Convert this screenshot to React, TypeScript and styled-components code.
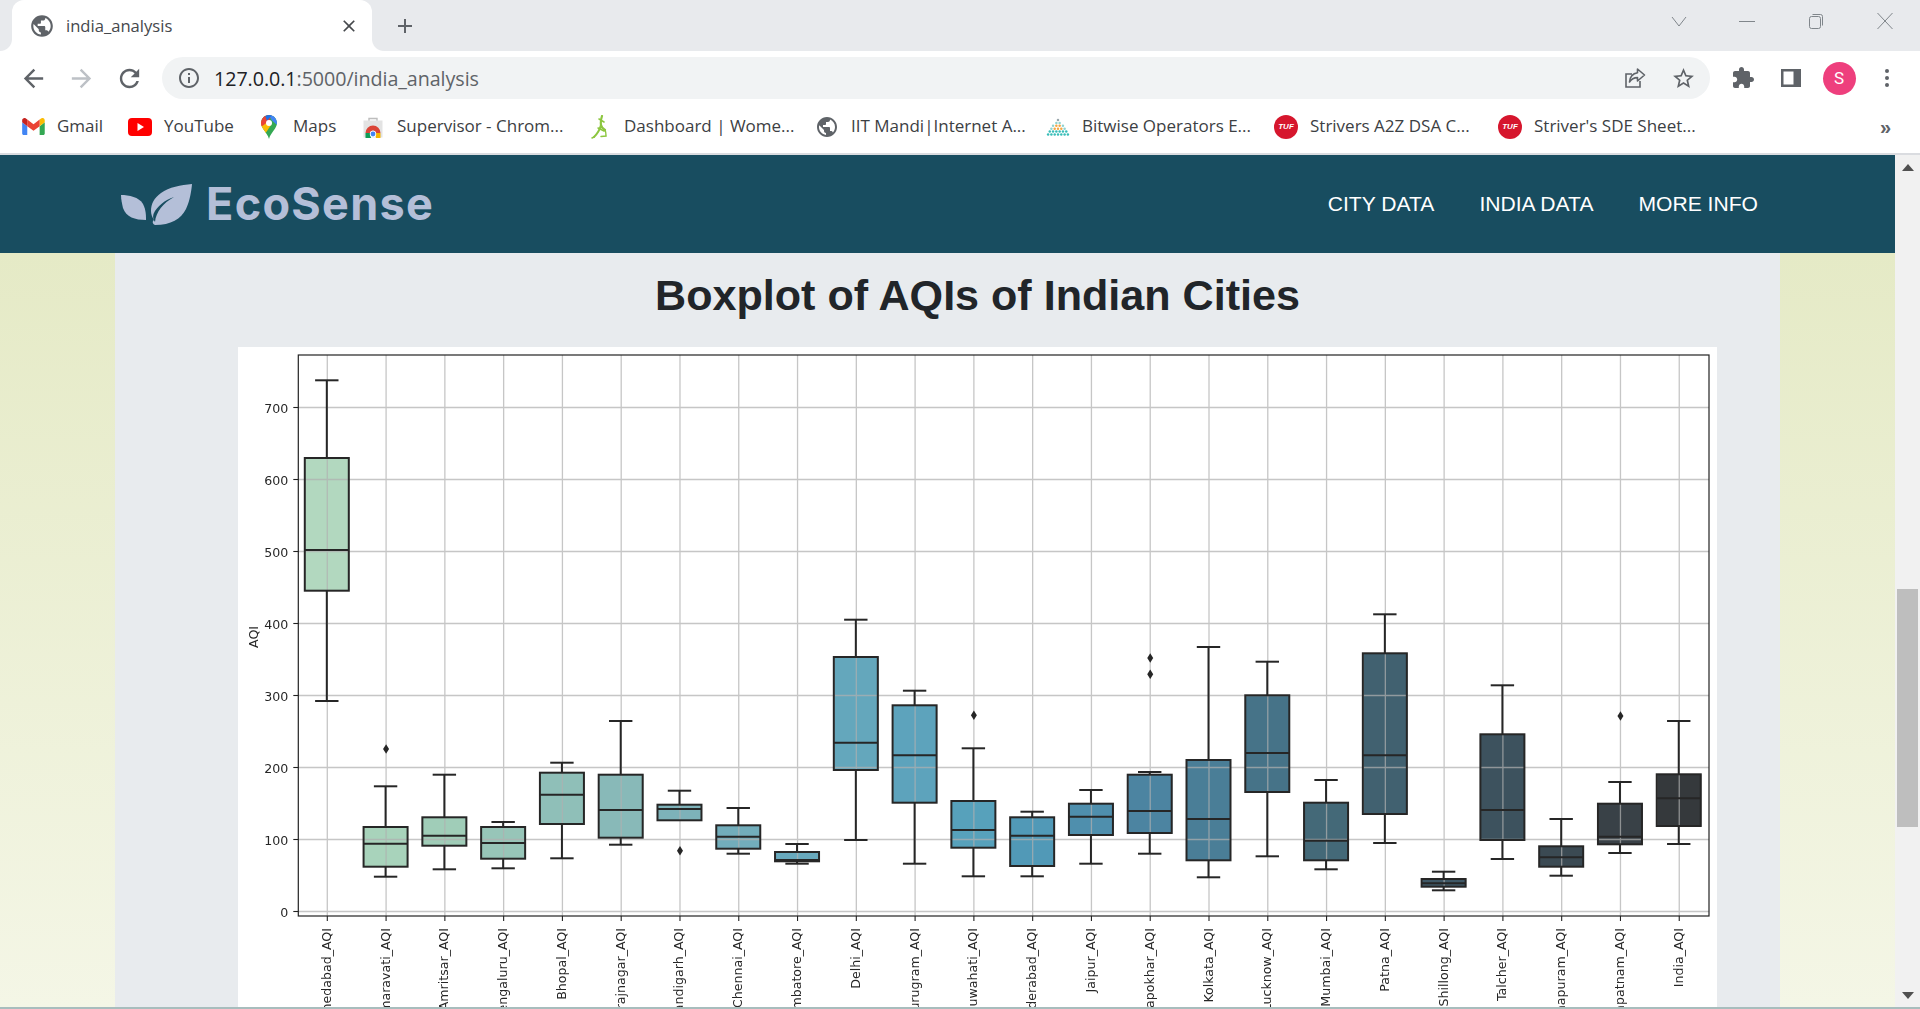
import React from "react";
import styled, { createGlobalStyle } from "styled-components";

const Global = createGlobalStyle`
  html, body { margin: 0; padding: 0; height: 100%; overflow: hidden; background: #fff; }
  #root { height: 1009px; }
  * { box-sizing: border-box; }
`;

const Shell = styled.div`
  height: 1009px; display: flex; flex-direction: column; overflow: hidden;
  font-family: "Open Sans", "Noto Sans", sans-serif;
`;
const TabStrip = styled.div`
  height: 51px; flex: none; background: #e8eaed; display: flex; align-items: flex-end; padding: 0 1px 0 12px;
`;
const Tab = styled.div`
  position: relative; width: 360px; height: 51px; background: #fff; border-radius: 12px 12px 0 0;
  display: flex; align-items: center; padding: 0 13px 0 17px;
  &::before, &::after { content: ""; position: absolute; bottom: 0; width: 12px; height: 12px; }
  &::before { left: -12px; background: radial-gradient(circle at 0 0, #e8eaed 11.5px, #fff 12.5px); }
  &::after { right: -12px; background: radial-gradient(circle at 100% 0, #e8eaed 11.5px, #fff 12.5px); }
`;
const TabTitle = styled.span`
  margin-left: 11px; font-size: 16.6px; color: #45484c; flex: 1; white-space: nowrap;
`;
const NewTab = styled.div`
  width: 24px; height: 51px; margin-left: 21px; display: flex; align-items: center; justify-content: center;
`;
const WindowControls = styled.div`
  margin-left: auto; height: 51px; display: flex;
`;
const WindowBtn = styled.div`
  width: 68.7px; height: 42px; display: flex; align-items: center; justify-content: center;
`;
const Toolbar = styled.div`
  height: 51px; flex: none; background: #fff; display: flex; align-items: flex-start; padding: 6px 9px 0;
`;
const IconSlot = styled.div`
  width: 48px; height: 42px; flex: none; display: flex; align-items: center; justify-content: center;
`;
const Address = styled.div`
  flex: 1; height: 42px; margin: 0 9px; background: #f1f3f4; border-radius: 21px; display: flex; align-items: center;
  padding: 0 3px 0 15px;
`;
const Url = styled.div`
  margin-left: 13px; flex: 1; font-size: 19.7px; color: #5f6368; white-space: nowrap; letter-spacing: -0.06px;
  b { font-weight: 400; color: #202124; }
`;
const Avatar = styled.div`
  width: 33px; height: 33px; border-radius: 50%; background: #ee3f7d; color: #fff; font-size: 17px;
  font-family: "Roboto", sans-serif; display: flex; align-items: center; justify-content: center;
`;
const Bookmarks = styled.div`
  height: 53px; flex: none; background: #fff; border-bottom: 2px solid #dadce0; display: flex; align-items: center;
  gap: 25px; padding: 0 0 2px 21px; position: relative;
`;
const Bookmark = styled.div`
  display: flex; align-items: center; gap: 12px; flex: none;
`;
const BookmarkIcon = styled.div`
  width: 24px; height: 24px; flex: none; display: flex; align-items: center; justify-content: center;
`;
const BookmarkLabel = styled.span<{ $w: number }>`
  width: ${(p) => p.$w}px; font-size: 17px; color: #3c4043; white-space: nowrap; margin-top: -2px;
`;
const More = styled.span`
  margin-left: auto; margin-right: 29px; color: #5f6368; font-size: 20px; font-weight: 700;
  font-family: "Liberation Sans", sans-serif; line-height: 1;
`;
const TufBadge = styled.div`
  width: 24px; height: 24px; border-radius: 50%; background: #d6162d; color: #fff; font: italic 700 8px "Liberation Sans", sans-serif;
  display: flex; align-items: center; justify-content: center;
`;
const Main = styled.div`
  flex: 1; min-height: 0; display: flex; overflow: hidden;
`;
const Page = styled.div`
  flex: 1; min-width: 0; overflow: hidden; display: flex; flex-direction: column;
  font-family: "Liberation Sans", Arial, sans-serif;
`;
const Nav = styled.nav`
  height: 98px; flex: none; background: #184d60; display: flex; align-items: center; padding: 0 137px 0 121px;
`;
const Brand = styled.div`
  display: flex; align-items: center; gap: 14px;
`;
const BrandName = styled.span`
  font-family: "Inter", sans-serif; font-weight: 700; font-size: 45px; line-height: 1; letter-spacing: 1.3px; color: #b4bfd8;
  margin-top: -1px;
`;
const NavLinks = styled.div`
  margin-left: auto; display: flex; gap: 45px;
`;
const NavLink = styled.a`
  font-size: 21.1px; color: #fff; text-transform: uppercase; white-space: nowrap;
`;
const Backdrop = styled.div`
  flex: 1; min-height: 0; padding: 0 115px; background: linear-gradient(180deg, #e5eac6 0%, #f4f6e6 100%);
`;
const Content = styled.main`
  height: 100%; background: #e8ebee; padding: 15px 63px 0 123px; overflow: hidden;
`;
const Title = styled.h1`
  margin: 0 0 25px; font-size: 43.1px; line-height: 54px; font-weight: 700; color: #212529; text-align: center;
`;
const ChartCard = styled.div`
  width: 1479px; height: 800px; background: #fff;
`;
const ChartSvg = styled.svg`
  display: block; filter: blur(0.35px);
  text { font-family: "DejaVu Sans", sans-serif; font-size: 12.6px; fill: #262626; }
`;
const ScrollTrack = styled.div`
  width: 25px; flex: none; background: #f1f1f1; display: flex; flex-direction: column; align-items: center; padding: 9px 0 8px;
`;
const ScrollThumb = styled.div`
  width: 21px; height: 238px; margin-top: 418px; background: #bebebe;
`;
const ScrollDown = styled.div`
  margin-top: auto; display: flex;
`;
const BottomStrip = styled.div`
  height: 2px; flex: none; background: #a8bdbd;
`;

const grey = "#5f6368";
const Mat = ({ d, size = 24, fill = grey }: { d: string; size?: number; fill?: string }) => (
  <svg width={size} height={size} viewBox="0 0 24 24"><path fill={fill} d={d} /></svg>
);
const GLOBE = "M12 2C6.48 2 2 6.48 2 12s4.48 10 10 10 10-4.48 10-10S17.52 2 12 2zm-1 17.93c-3.95-.49-7-3.85-7-7.93 0-.62.08-1.21.21-1.79L9 15v1c0 1.1.9 2 2 2v1.93zm6.9-2.54c-.26-.81-1-1.39-1.9-1.39h-1v-3c0-.55-.45-1-1-1H8v-2h2c.55 0 1-.45 1-1V7h2c1.1 0 2-.9 2-2v-.41c2.93 1.19 5 4.06 5 7.41 0 2.08-.8 3.97-2.1 5.39z";
const BACK = "M20 11H7.83l5.59-5.59L12 4l-8 8 8 8 1.41-1.41L7.83 13H20v-2z";
const FORWARD = "M4 11h12.17l-5.59-5.59L12 4l8 8-8 8-1.41-1.41L16.17 13H4v-2z";
const RELOAD = "M17.65 6.35C16.2 4.9 14.21 4 12 4c-4.42 0-7.99 3.58-7.99 8s3.57 8 7.99 8c3.73 0 6.84-2.55 7.73-6h-2.08c-.82 2.33-3.04 4-5.65 4-3.31 0-6-2.69-6-6s2.69-6 6-6c1.66 0 3.14.69 4.22 1.78L13 11h7V4l-2.35 2.35z";
const INFO = "M11 7h2v2h-2zm0 4h2v6h-2zm1-9C6.48 2 2 6.48 2 12s4.48 10 10 10 10-4.48 10-10S17.52 2 12 2zm0 18c-4.41 0-8-3.59-8-8s3.59-8 8-8 8 3.59 8 8-3.59 8-8 8z";
const STAR = "M22 9.24l-7.19-.62L12 2 9.19 8.63 2 9.24l5.46 4.73L5.82 21 12 17.27 18.18 21l-1.63-7.03L22 9.24zM12 15.4l-3.76 2.27 1-4.28-3.32-2.88 4.38-.38L12 6.1l1.71 4.04 4.38.38-3.32 2.88 1 4.28L12 15.4z";
const PUZZLE = "M20.5 11H19V7c0-1.1-.9-2-2-2h-4V3.5C13 2.12 11.88 1 10.5 1S8 2.12 8 3.5V5H4c-1.1 0-1.99.9-1.99 2v3.8H3.5c1.49 0 2.7 1.21 2.7 2.7s-1.21 2.7-2.7 2.7H2V20c0 1.1.9 2 2 2h3.8v-1.5c0-1.49 1.21-2.7 2.7-2.7 1.49 0 2.7 1.21 2.7 2.7V22H17c1.1 0 2-.9 2-2v-4h1.5c1.38 0 2.5-1.12 2.5-2.5S21.88 11 20.5 11z";
const CLOSE = "M19 6.41L17.59 5 12 10.59 6.41 5 5 6.41 10.59 12 5 17.59 6.41 19 12 13.41 17.59 19 19 17.59 13.41 12z";
const PLUS = "M19 13h-6v6h-2v-6H5v-2h6V5h2v6h6v2z";

const ShareIcon = () => (
  <svg width="24" height="24" viewBox="0 0 24 24" fill="none" stroke={grey} strokeWidth="1.6">
    <path d="M17 15v6H3V8h6" />
    <path fill="#f1f3f4" strokeLinejoin="round" d="M14.5 3l7 6-7 6v-3.4c-3.6 0-6 1.2-8 4.4.4-4.6 3-8.4 8-9.2z" />
  </svg>
);
const PanelIcon = () => (
  <svg width="24" height="24" viewBox="0 0 24 24">
    <path fill={grey} fillRule="evenodd" d="M2 3h20v18H2zM4.500 5.500v13h10v-13z" />
  </svg>
);
const Kebab = () => (
  <svg width="24" height="24" viewBox="0 0 24 24" fill={grey}>
    <circle cx="12" cy="5" r="2" /><circle cx="12" cy="12" r="2" /><circle cx="12" cy="19" r="2" />
  </svg>
);
const WinIcon = ({ kind }: { kind: string }) => (
  <svg width="18" height="18" viewBox="0 0 18 18" fill="none" stroke="#80868b" strokeWidth="1">
    {kind === "chev" && <path d="M2 5l7 9 7-9" />}
    {kind === "min" && <path d="M1 9.500h16" />}
    {kind === "max" && <><rect x="2.500" y="4.500" width="11" height="12" rx="2" /><path d="M5.500 2.500h8a2 2 0 0 1 2 2v9" /></>}
    {kind === "close" && <path d="M1.500 1l15 16M16.500 1l-15 16" />}
  </svg>
);

const GmailIcon = () => (
  <svg width="23" height="17" viewBox="0 0 24 18">
    <path fill="#4285f4" d="M1.600 18h3.800V8.700L0 4.600v11.800C0 17.300.7 18 1.600 18z" />
    <path fill="#34a853" d="M18.500 18h3.800c.9 0 1.600-.7 1.600-1.600V4.600l-5.400 4.100" />
    <path fill="#fbbc04" d="M18.500 1.600v7.100l5.400-4.100V2.400c0-2-2.300-3.200-3.900-1.900" />
    <path fill="#ea4335" d="M5.400 8.700V1.600L12 6.500l6.500-4.900v7.100L12 13.600" />
    <path fill="#c5221f" d="M0 2.400v2.200l5.400 4.100V1.600L3.900.5C2.300-.7 0 .4 0 2.400z" />
  </svg>
);
const YouTubeIcon = () => (
  <svg width="24" height="18" viewBox="0 0 24 18">
    <rect width="24" height="18" rx="4" fill="#f00" /><path fill="#fff" d="M9.500 5l6.500 4-6.500 4z" />
  </svg>
);
const MapsIcon = () => (
  <svg width="16" height="24" viewBox="0 0 16 24">
    <defs><clipPath id="pin"><path d="M8 0C3.600 0 0 3.600 0 8c0 5.500 6.200 9.200 8 16 1.800-6.800 8-10.500 8-16 0-4.400-3.600-8-8-8z" /></clipPath></defs>
    <g clipPath="url(#pin)">
      <rect width="16" height="24" fill="#34a853" />
      <path fill="#fbbc04" d="M0 6h6l4 4-8 12H0z" />
      <path fill="#ea4335" d="M0 0v12l8-6 3-6z" />
      <path fill="#4285f4" d="M8 0h8v10L10.500 5z" />
      <path fill="#1a73e8" d="M4 0h7L6 6z" />
    </g>
    <circle cx="8" cy="8" r="3" fill="#fff" />
  </svg>
);
const StoreIcon = () => (
  <svg width="22" height="22" viewBox="0 0 22 22">
    <path fill="none" stroke="#bdbdbd" strokeWidth="1.400" d="M7 5V2.500h8V5" />
    <rect x="1.500" y="4.500" width="19" height="17" fill="#e3e3e3" />
    <path fill="#db4437" d="M3.500 17a7.500 7.500 0 0 1 15 0h-5a2.500 2.500 0 0 0-5 0z" />
    <path fill="#f4b400" d="M13 17h5.500v5H14z" />
    <path fill="#0f9d58" d="M3.500 17H8l1 5H3.500z" />
    <circle cx="11" cy="18" r="3.200" fill="#fff" />
    <circle cx="11" cy="18" r="2.400" fill="#4285f4" />
  </svg>
);
const RunnerIcon = () => (
  <svg width="18" height="24" viewBox="0 0 18 24" fill="none" stroke="#8cc63f" strokeLinecap="round">
    <path strokeWidth="2.200" d="M11 1c-1 3-1.500 6-1 9 .3 2 2.500 4 4 5" />
    <path strokeWidth="2" d="M10 10c-1 4-3 8-7 12" />
    <path strokeWidth="1.500" d="M14 15c1 2 1 4 1 6l-5 .5M3 22l-2 1M8 4l5 3M7 13l6 3" />
  </svg>
);
const BitwiseIcon = () => {
  const dots: React.ReactElement[] = [];
  const rows = [1, 2, 4, 5, 6, 7];
  rows.forEach((n, r) => {
    for (let i = 0; i < n; i++) {
      const c = r >= 4 ? "#38bdb8" : r >= 2 && i > 0 && i < n - 1 ? "#f5a742" : r === 0 ? "#9aa7ad" : "#8fd3d0";
      dots.push(<circle key={`${r}-${i}`} cx={12 + (i - (n - 1) / 2) * 3.300} cy={3 + r * 2.900} r={1.250} fill={c} />);
    }
  });
  return <svg width="24" height="20" viewBox="0 0 24 20">{dots}</svg>;
};

const bookmarks = [
  { label: "Gmail", w: 46, icon: <GmailIcon /> },
  { label: "YouTube", w: 68, icon: <YouTubeIcon /> },
  { label: "Maps", w: 43, icon: <MapsIcon /> },
  { label: "Supervisor - Chrom...", w: 166, icon: <StoreIcon /> },
  { label: "Dashboard | Wome...", w: 166, icon: <RunnerIcon /> },
  { label: "IIT Mandi|Internet A...", w: 170, icon: <Mat d={GLOBE} size={26} /> },
  { label: "Bitwise Operators E...", w: 167, icon: <BitwiseIcon /> },
  { label: "Strivers A2Z DSA C...", w: 163, icon: <TufBadge>TUF</TufBadge> },
  { label: "Striver's SDE Sheet...", w: 163, icon: <TufBadge>TUF</TufBadge> },
];

const LogoMark = () => (
  <svg width="71" height="41" viewBox="0 0 71 41" fill="#b4bfd8">
    <path d="M0 11C8 11 18 13 22 20C25 26 25 31 25 36C14 36 5 33 2 24C1 20 0 15 0 11Z" />
    <path d="M71 0C60 1 48 3 40 9C33 14 30 20 30 27C30 30 31 33 33 36C30 38 33 41 34 41C50 41 60 35 65 25C70 15 71 0 71 0Z" />
    <path fill="#184d60" d="M34 38C35 28 42 19 53 13C44 16 36 22 32.500 30C31.500 33 32.500 36 34 38Z" />
  </svg>
);

type Box = { n: string; c: string; top: number; q3: number; m: number; q1: number; low: number; out?: number[] };
const boxes: Box[] = [
  { n: "Ahmedabad_AQI", c: "#b2d8bf", top: 380.3, q3: 458, m: 550, q1: 590.7, low: 701 },
  { n: "Amaravati_AQI", c: "#a8d3bb", top: 786.3, q3: 827, m: 843.7, q1: 866.7, low: 876.7, out: [749] },
  { n: "Amritsar_AQI", c: "#a0cdb8", top: 774.7, q3: 817.3, m: 835.7, q1: 845.7, low: 869.3 },
  { n: "Bengaluru_AQI", c: "#97c5b8", top: 822, q3: 827, m: 843, q1: 858.7, low: 868.3 },
  { n: "Bhopal_AQI", c: "#8fbfb8", top: 762.7, q3: 772.7, m: 794.7, q1: 824, low: 858.3 },
  { n: "Brajrajnagar_AQI", c: "#88b9b8", top: 721, q3: 774.7, m: 810, q1: 837.7, low: 844.7 },
  { n: "Chandigarh_AQI", c: "#7db2b9", top: 790.7, q3: 804.7, m: 809, q1: 820.3, low: 820.3, out: [850.7] },
  { n: "Chennai_AQI", c: "#72adbb", top: 808, q3: 825.3, m: 836.7, q1: 848.7, low: 853.7 },
  { n: "Coimbatore_AQI", c: "#68a9bd", top: 844, q3: 852, m: 860, q1: 861.3, low: 863.7 },
  { n: "Delhi_AQI", c: "#64a7bc", top: 619.7, q3: 657, m: 742.7, q1: 770, low: 840 },
  { n: "Gurugram_AQI", c: "#5da3bc", top: 690.7, q3: 705.3, m: 755.3, q1: 802.7, low: 863.7 },
  { n: "Guwahati_AQI", c: "#57a1bb", top: 748.3, q3: 801, m: 830, q1: 847.7, low: 876.3, out: [715.3] },
  { n: "Hyderabad_AQI", c: "#5199b7", top: 811.7, q3: 817.3, m: 835.7, q1: 866, low: 876.3 },
  { n: "Jaipur_AQI", c: "#4f8fad", top: 790, q3: 803.7, m: 816.7, q1: 835, low: 863.7 },
  { n: "Jorapokhar_AQI", c: "#4c84a1", top: 772, q3: 774.7, m: 811, q1: 833, low: 853.7, out: [658, 674.3] },
  { n: "Kolkata_AQI", c: "#4a7e97", top: 647, q3: 760, m: 819, q1: 860.3, low: 877.3 },
  { n: "Lucknow_AQI", c: "#467388", top: 661.7, q3: 695.3, m: 753, q1: 792, low: 856.3 },
  { n: "Mumbai_AQI", c: "#446978", top: 780, q3: 802.7, m: 840.7, q1: 860.3, low: 869.3 },
  { n: "Patna_AQI", c: "#416170", top: 614.3, q3: 653.3, m: 755.3, q1: 814, low: 843 },
  { n: "Shillong_AQI", c: "#3f5866", top: 871.7, q3: 879, m: 883.3, q1: 886.7, low: 890.3 },
  { n: "Talcher_AQI", c: "#3d525e", top: 685.3, q3: 734.3, m: 810, q1: 840, low: 859 },
  { n: "Thiruvananthapuram_AQI", c: "#3b4a53", top: 819, q3: 846.3, m: 857.3, q1: 866.7, low: 875.7 },
  { n: "Visakhapatnam_AQI", c: "#394147", top: 782, q3: 803.7, m: 836.7, q1: 844.3, low: 853, out: [716] },
  { n: "India_AQI", c: "#35393c", top: 721, q3: 774.3, m: 798.3, q1: 826, low: 844 },
];

const OX = 238, OY = 347;
const LEFT = 298.3 - OX, RIGHT = 1709 - OX, TOP = 355 - OY, BOTTOM = 916 - OY;
const cx = (i: number) => 327.3 - OX + i * 58.78;
const py = (y: number) => y - OY;
const ticks = [0, 100, 200, 300, 400, 500, 600, 700];
const tickY = (v: number) => 911.5 - OY - v * 0.72;
const INK = "#262626";

const BoxPlot = () => (
  <ChartSvg width="1479" height="800" viewBox="0 0 1479 800">
    {boxes.map((b, i) => (
      <rect key={b.n} x={cx(i) - 22} y={py(b.q3)} width={44} height={b.q1 - b.q3} fill={b.c} />
    ))}
    <g stroke="#b0b0b0" strokeWidth="1.300" opacity="0.72">
      {ticks.map((t) => <line key={t} x1={LEFT} x2={RIGHT} y1={tickY(t)} y2={tickY(t)} />)}
      {boxes.map((b, i) => <line key={b.n} x1={cx(i)} x2={cx(i)} y1={TOP} y2={BOTTOM} />)}
    </g>
    <g fill="none" stroke={INK} strokeWidth="2">
      {boxes.map((b, i) => {
        const x = cx(i) - 0.5;
        return (
          <g key={b.n}>
            <rect x={x - 22} y={py(b.q3)} width={44} height={b.q1 - b.q3} />
            <line x1={x - 22} x2={x + 22} y1={py(b.m)} y2={py(b.m)} />
            <line x1={x} x2={x} y1={py(b.top)} y2={py(b.q3)} />
            <line x1={x} x2={x} y1={py(b.q1)} y2={py(b.low)} />
            <line x1={x - 11.7} x2={x + 11.7} y1={py(b.top)} y2={py(b.top)} />
            {b.low !== b.q1 && <line x1={x - 11.7} x2={x + 11.7} y1={py(b.low)} y2={py(b.low)} />}
            {(b.out || []).map((o) => (
              <path key={o} stroke="none" fill={INK} d={`M${x + 0.5} ${py(o) - 4.7}L${x + 3.5} ${py(o)}L${x + 0.5} ${py(o) + 4.7}L${x - 2.5} ${py(o)}Z`} />
            ))}
          </g>
        );
      })}
    </g>
    <rect x={LEFT} y={TOP} width={RIGHT - LEFT} height={BOTTOM - TOP} fill="none" stroke="#222" strokeWidth="1.200" />
    <g stroke="#222" strokeWidth="1.100">
      {ticks.map((t) => <line key={t} x1={LEFT - 5} x2={LEFT} y1={tickY(t)} y2={tickY(t)} />)}
      {boxes.map((b, i) => <line key={b.n} x1={cx(i)} x2={cx(i)} y1={BOTTOM} y2={BOTTOM + 5} />)}
    </g>
    {ticks.map((t) => (
      <text key={t} x={LEFT - 10} y={tickY(t) + 5.5} textAnchor="end">{t}</text>
    ))}
    <text transform={`translate(19.500 ${637 - OY}) rotate(-90)`} textAnchor="middle">AQI</text>
    {boxes.map((b, i) => (
      <text key={b.n} transform={`translate(${cx(i) + 3.5} ${928 - OY}) rotate(-90)`} textAnchor="end">{b.n}</text>
    ))}
  </ChartSvg>
);

const Triangle = ({ down }: { down?: boolean }) => (
  <svg width="12" height="7" viewBox="0 0 12 7"><path fill="#505050" d={down ? "M0 0h12L6 7z" : "M0 7h12L6 0z"} /></svg>
);

export default function App() {
  return (
    <Shell>
      <Global />
      <TabStrip>
        <Tab>
          <Mat d={GLOBE} size={26} />
          <TabTitle>india_analysis</TabTitle>
          <Mat d={CLOSE} size={20} fill="#45484c" />
        </Tab>
        <NewTab><Mat d={PLUS} size={28} /></NewTab>
        <WindowControls>
          <WindowBtn><WinIcon kind="chev" /></WindowBtn>
          <WindowBtn><WinIcon kind="min" /></WindowBtn>
          <WindowBtn><WinIcon kind="max" /></WindowBtn>
          <WindowBtn><WinIcon kind="close" /></WindowBtn>
        </WindowControls>
      </TabStrip>
      <Toolbar>
        <IconSlot><Mat d={BACK} size={29} /></IconSlot>
        <IconSlot><Mat d={FORWARD} size={29} fill="#bdc1c6" /></IconSlot>
        <IconSlot><Mat d={RELOAD} size={29} /></IconSlot>
        <Address>
          <Mat d={INFO} />
          <Url><b>127.0.0.1</b>:5000/india_analysis</Url>
          <IconSlot><ShareIcon /></IconSlot>
          <IconSlot><Mat d={STAR} size={25} /></IconSlot>
        </Address>
        <IconSlot><Mat d={PUZZLE} /></IconSlot>
        <IconSlot><PanelIcon /></IconSlot>
        <IconSlot><Avatar>S</Avatar></IconSlot>
        <IconSlot><Kebab /></IconSlot>
      </Toolbar>
      <Bookmarks>
        {bookmarks.map((b) => (
          <Bookmark key={b.label}>
            <BookmarkIcon>{b.icon}</BookmarkIcon>
            <BookmarkLabel $w={b.w}>{b.label}</BookmarkLabel>
          </Bookmark>
        ))}
        <More>»</More>
      </Bookmarks>
      <Main>
        <Page>
          <Nav>
            <Brand>
              <LogoMark />
              <BrandName>EcoSense</BrandName>
            </Brand>
            <NavLinks>
              <NavLink>City Data</NavLink>
              <NavLink>India Data</NavLink>
              <NavLink>More Info</NavLink>
            </NavLinks>
          </Nav>
          <Backdrop>
            <Content>
              <Title>Boxplot of AQIs of Indian Cities</Title>
              <ChartCard><BoxPlot /></ChartCard>
            </Content>
          </Backdrop>
        </Page>
        <ScrollTrack>
          <Triangle />
          <ScrollThumb />
          <ScrollDown><Triangle down /></ScrollDown>
        </ScrollTrack>
      </Main>
      <BottomStrip />
    </Shell>
  );
}
